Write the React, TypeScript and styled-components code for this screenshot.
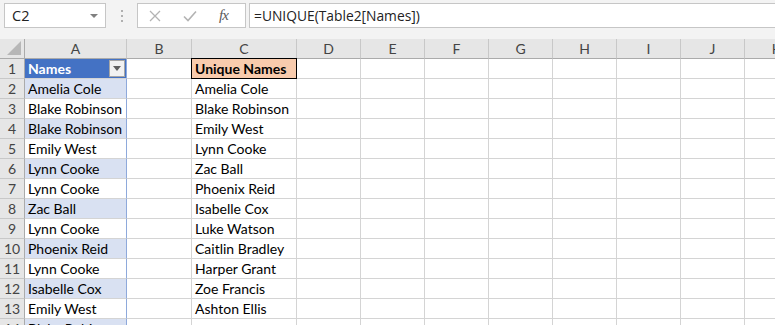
import React from 'react';
import styled, { createGlobalStyle } from 'styled-components';

const GlobalStyle = createGlobalStyle`
  body {
    margin: 0;
    background: #ffffff;
  }
`;

const columns = ['A', 'B', 'C', 'D', 'E', 'F', 'G', 'H', 'I', 'J', 'K'];

const names = [
  'Amelia Cole',
  'Blake Robinson',
  'Blake Robinson',
  'Emily West',
  'Lynn Cooke',
  'Lynn Cooke',
  'Zac Ball',
  'Lynn Cooke',
  'Phoenix Reid',
  'Lynn Cooke',
  'Isabelle Cox',
  'Emily West',
  'Blake Robinson',
];

const uniqueNames = [
  'Amelia Cole',
  'Blake Robinson',
  'Emily West',
  'Lynn Cooke',
  'Zac Ball',
  'Phoenix Reid',
  'Isabelle Cox',
  'Luke Watson',
  'Caitlin Bradley',
  'Harper Grant',
  'Zoe Francis',
  'Ashton Ellis',
];

export default function App() {
  return (
    <Frame>
      <GlobalStyle />
      <FormulaBar>
        <NameBox>
          <span>C2</span>
          <Caret />
        </NameBox>
        <Grip>
          <i />
          <i />
          <i />
        </Grip>
        <ButtonBox>
          <svg width="12" height="12" viewBox="0 0 12 12">
            <path d="M1 1 L11 11 M11 1 L1 11" stroke="#b3b3b3" strokeWidth="1.3" fill="none" />
          </svg>
          <svg width="14" height="12" viewBox="0 0 14 12">
            <path d="M1 6.5 L5 10.5 L13 1.5" stroke="#b3b3b3" strokeWidth="1.6" fill="none" />
          </svg>
          <Fx>fx</Fx>
        </ButtonBox>
        <FormulaInput>=UNIQUE(Table2[Names])</FormulaInput>
      </FormulaBar>

      <Sheet>
        <Corner>
          <svg width="14" height="14" viewBox="0 0 14 14">
            <path d="M14 0 L14 14 L0 14 Z" fill="#b7b7b7" />
          </svg>
        </Corner>
        {columns.map((c) => (
          <ColHeader key={c}>{c}</ColHeader>
        ))}

        {Array.from({ length: 14 }).map((_, r) => {
          const row = r + 1;
          return (
            <React.Fragment key={row}>
              <RowHeader>{row}</RowHeader>
              {row === 1 ? (
                <TableHead>
                  <span>Names</span>
                  <FilterButton>
                    <svg width="8" height="5" viewBox="0 0 8 5">
                      <path d="M0 0 L8 0 L4 5 Z" fill="#606060" />
                    </svg>
                  </FilterButton>
                </TableHead>
              ) : (
                <TableCell $banded={row % 2 === 0}>{names[row - 2]}</TableCell>
              )}
              <Cell />
              {row === 1 ? (
                <HighlightCell>Unique Names</HighlightCell>
              ) : (
                <Cell>{uniqueNames[row - 2] ?? ''}</Cell>
              )}
              {columns.slice(3).map((c) => (
                <Cell key={c} />
              ))}
            </React.Fragment>
          );
        })}
      </Sheet>
    </Frame>
  );
}

const Frame = styled.div`
  width: 775px;
  height: 325px;
  overflow: hidden;
  background: #f3f3f3;
  font-family: Lato, 'Liberation Sans', sans-serif;
`;

const FormulaBar = styled.div`
  display: flex;
  align-items: stretch;
  height: 25px;
  padding: 3px 0 11px 4px;
`;

const Box = styled.div`
  box-sizing: border-box;
  height: 25px;
  background: #ffffff;
  border: 1px solid #c6c6c6;
`;

const NameBox = styled(Box)`
  width: 102px;
  display: flex;
  align-items: center;
  justify-content: space-between;
  padding: 0 7px 0 7px;
  font-family: 'Open Sans', sans-serif;
  font-size: 14.5px;
  color: #222;
`;

const Caret = styled.div`
  width: 0;
  height: 0;
  border-left: 4px solid transparent;
  border-right: 4px solid transparent;
  border-top: 4px solid #808080;
`;

const Grip = styled.div`
  width: 31px;
  display: flex;
  flex-direction: column;
  align-items: center;
  justify-content: center;
  gap: 3px;

  i {
    width: 2px;
    height: 2px;
    background: #b0b0b0;
  }
`;

const ButtonBox = styled(Box)`
  width: 109px;
  display: flex;
  align-items: center;
  gap: 22px;
  padding: 0 0 0 11px;
`;

const Fx = styled.span`
  font-family: 'Liberation Serif', serif;
  font-style: italic;
  font-size: 15px;
  color: #5a5a5a;
  letter-spacing: -1px;
`;

const FormulaInput = styled(Box)`
  flex: 1;
  margin-left: 3px;
  margin-right: -1px;
  display: flex;
  align-items: center;
  padding-left: 4px;
  font-family: 'Open Sans', sans-serif;
  font-size: 13.8px;
  color: #222;
`;

const Sheet = styled.div`
  display: grid;
  grid-template-columns: 25px 102px 65px 105px repeat(8, 64px);
  grid-auto-rows: 20px;
  background: #ffffff;
  font-size: 14px;
`;

const HeaderBase = styled.div`
  box-sizing: border-box;
  background: #e6e6e6;
  color: #444444;
  display: flex;
  align-items: center;
  justify-content: center;
  font-size: 14px;
`;

const Corner = styled(HeaderBase)`
  border-right: 1px solid #ababab;
  border-bottom: 1px solid #ababab;
  align-items: flex-end;
  justify-content: flex-end;
  padding: 0 3px 3px 0;
`;

const ColHeader = styled(HeaderBase)`
  border-right: 1px solid #c8c8c8;
  border-bottom: 1px solid #ababab;
`;

const RowHeader = styled(HeaderBase)`
  border-right: 1px solid #ababab;
  border-bottom: 1px solid #c8c8c8;
`;

const Cell = styled.div`
  box-sizing: border-box;
  border-right: 1px solid #d4d4d4;
  border-bottom: 1px solid #d4d4d4;
  padding-left: 3px;
  display: flex;
  align-items: center;
  white-space: nowrap;
  overflow: hidden;
  color: #000;
`;

const TableCell = styled(Cell)<{ $banded: boolean }>`
  background: ${(p) => (p.$banded ? '#d9e1f2' : '#ffffff')};
  border-right-color: #8ea9db;
`;

const TableHead = styled(Cell)`
  background: #4472c4;
  color: #ffffff;
  font-weight: bold;
  justify-content: space-between;
  padding-right: 1px;
  border-right-color: #8ea9db;
`;

const FilterButton = styled.div`
  box-sizing: border-box;
  width: 16px;
  height: 17px;
  background: #f2f2f2;
  border: 1px solid #a6a6a6;
  display: flex;
  align-items: center;
  justify-content: center;
`;

const HighlightCell = styled(Cell)`
  background: #f8cbad;
  font-weight: bold;
  border: 1px solid #000000;
  margin: -1px 0 0 -1px;
  padding-left: 3px;
`;
